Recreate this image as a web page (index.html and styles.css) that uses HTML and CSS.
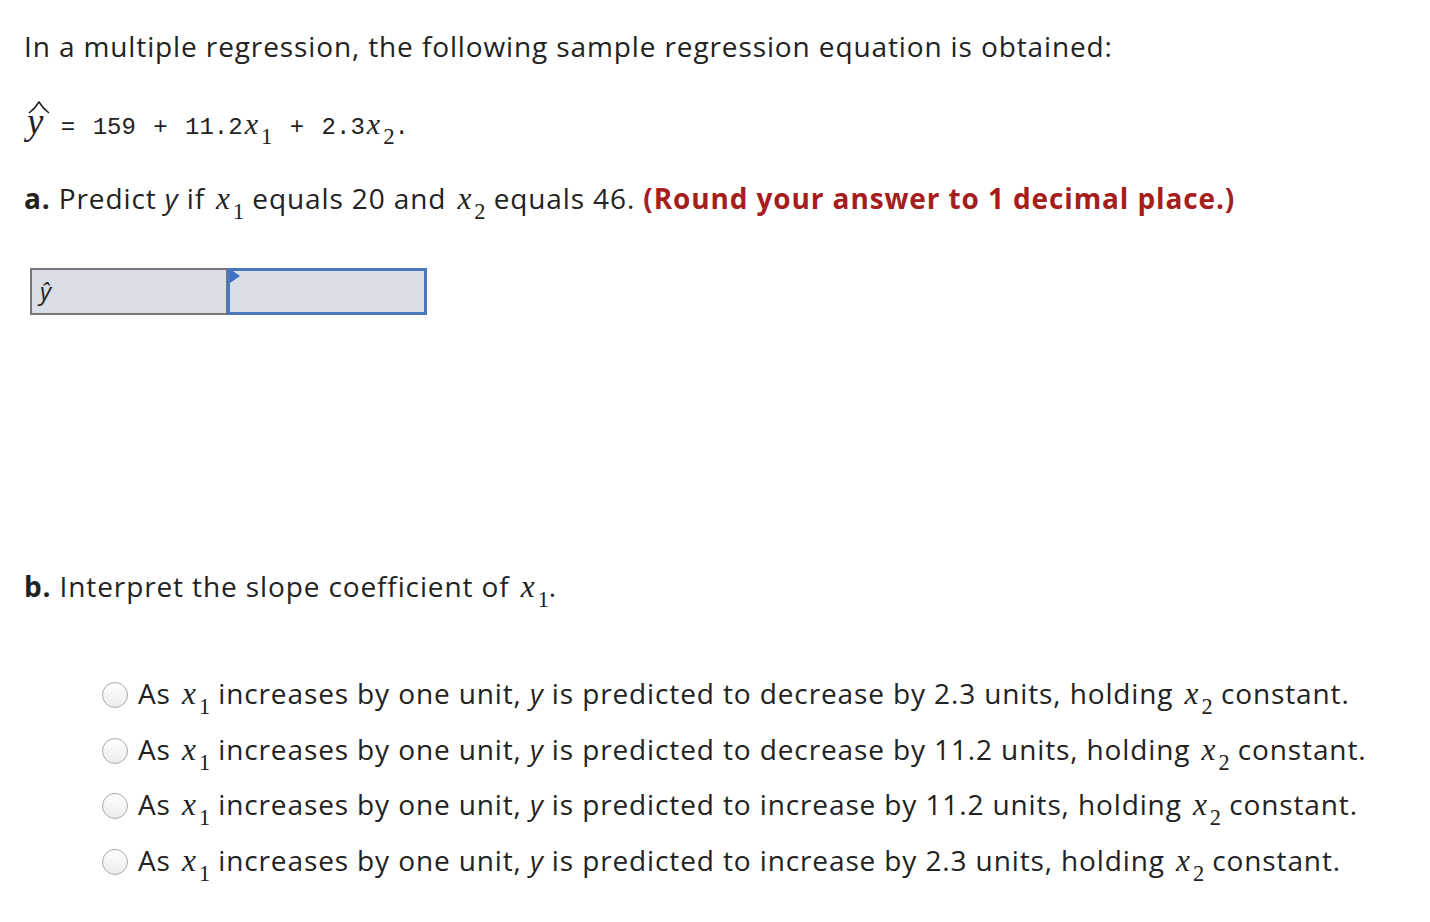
FILE: index.html
```html
<!DOCTYPE html>
<html>
<head>
<meta charset="utf-8">
<link rel="stylesheet" href="styles.css">
</head>
<body>
<div class="page">
  <p class="intro">In a multiple regression, the following sample regression equation is obtained:</p>
  <p class="eq"><span class="yhat">y<svg class="hat" width="22" height="13" viewBox="0 0 22 13"><path d="M1 12 C5 9 8 6 11 1 C14 6 17 9 21 12" fill="none" stroke="#222" stroke-width="1.5"/></svg></span><span class="mono"> = 159 + 11.2<span class="mv">x</span><sub>1</sub> + 2.3<span class="mv">x</span><sub>2</sub>.</span></p>
  <p class="q qa"><b>a.</b> Predict <i>y</i> if <span class="mv">x</span><sub>1</sub> equals 20 and <span class="mv">x</span><sub>2</sub> equals 46. <b class="red">(Round your answer to 1 decimal place.)</b></p>
  <div class="answer">
    <div class="cell label"><i>ŷ</i></div>
    <div class="cell input"><span class="flag"></span></div>
  </div>
  <p class="q qb"><b>b.</b> Interpret the slope coefficient of <span class="mv">x</span><sub>1</sub>.</p>
  <ul class="options">
    <li><span class="radio"></span>As <span class="mv">x</span><sub>1</sub> increases by one unit, <i>y</i> is predicted to decrease by 2.3 units, holding <span class="mv">x</span><sub>2</sub> constant.</li>
    <li><span class="radio"></span>As <span class="mv">x</span><sub>1</sub> increases by one unit, <i>y</i> is predicted to decrease by 11.2 units, holding <span class="mv">x</span><sub>2</sub> constant.</li>
    <li><span class="radio"></span>As <span class="mv">x</span><sub>1</sub> increases by one unit, <i>y</i> is predicted to increase by 11.2 units, holding <span class="mv">x</span><sub>2</sub> constant.</li>
    <li><span class="radio"></span>As <span class="mv">x</span><sub>1</sub> increases by one unit, <i>y</i> is predicted to increase by 2.3 units, holding <span class="mv">x</span><sub>2</sub> constant.</li>
  </ul>
</div>
</body>
</html>
```
FILE: styles.css
```css
html, body { margin: 0; padding: 0; background: #fff; }
body { font-family: "Open Sans", "Lato", sans-serif; color: #222; font-size: 28px; letter-spacing: 0.88px; }
.page { padding: 24px 0 0 24px; }
p { margin: 0; }
.intro { line-height: 44px; }
.mv { font-family: "Liberation Serif", serif; font-style: italic; font-size: 1.12em; letter-spacing: 0; margin: 0 1px 0 3px; }
sub { font-size: 0.8em; vertical-align: -0.45em; line-height: 0; font-family: "Liberation Serif", serif; letter-spacing: 0; margin-left: 2px; }
.eq { margin-top: 34px; line-height: 40px; }
.yhat { position: relative; display: inline-block; font-family: "Liberation Serif", serif; font-style: italic; font-size: 37px; margin-left: 3px; letter-spacing: 0; }
.hat { position: absolute; left: 1px; top: -1px; }
.mono { font-family: "Liberation Mono", monospace; font-size: 24px; color: #222; white-space: pre; letter-spacing: 0; word-spacing: 3px; }
.mono .mv { font-size: 1.25em; margin: 0 1px 0 2px; }
.mono sub { font-size: 0.95em; }
.q { line-height: 44px; }
.qa { margin-top: 28px; }
.red { color: #a51d1d; }
.answer { display: flex; margin: 47px 0 0 6px; }
.cell { width: 197px; height: 47px; box-sizing: border-box; background: #d9dde5; }
.label { border: 2px solid #777; border-right: 1px solid #777; padding: 4px 0 0 8px; font-size: 24px; }
.input { position: relative; border: 3px solid #4a78bd; width: 200px; }
.flag { position: absolute; left: 0; top: -2px; width: 0; height: 0; border-top: 7px solid transparent; border-bottom: 7px solid transparent; border-left: 10px solid #3e6fc2; }
.qb { margin-top: 249px; }
.options { list-style: none; margin: 64px 0 0 78px; padding: 0; }
.options li { height: 55.5px; line-height: 40px; white-space: nowrap; }
.radio { display: inline-block; vertical-align: -4px; width: 26px; height: 26px; border-radius: 50%; border: 1px solid #aaa; box-sizing: border-box; background: linear-gradient(#fff, #ececec); margin-right: 10px; }
```
